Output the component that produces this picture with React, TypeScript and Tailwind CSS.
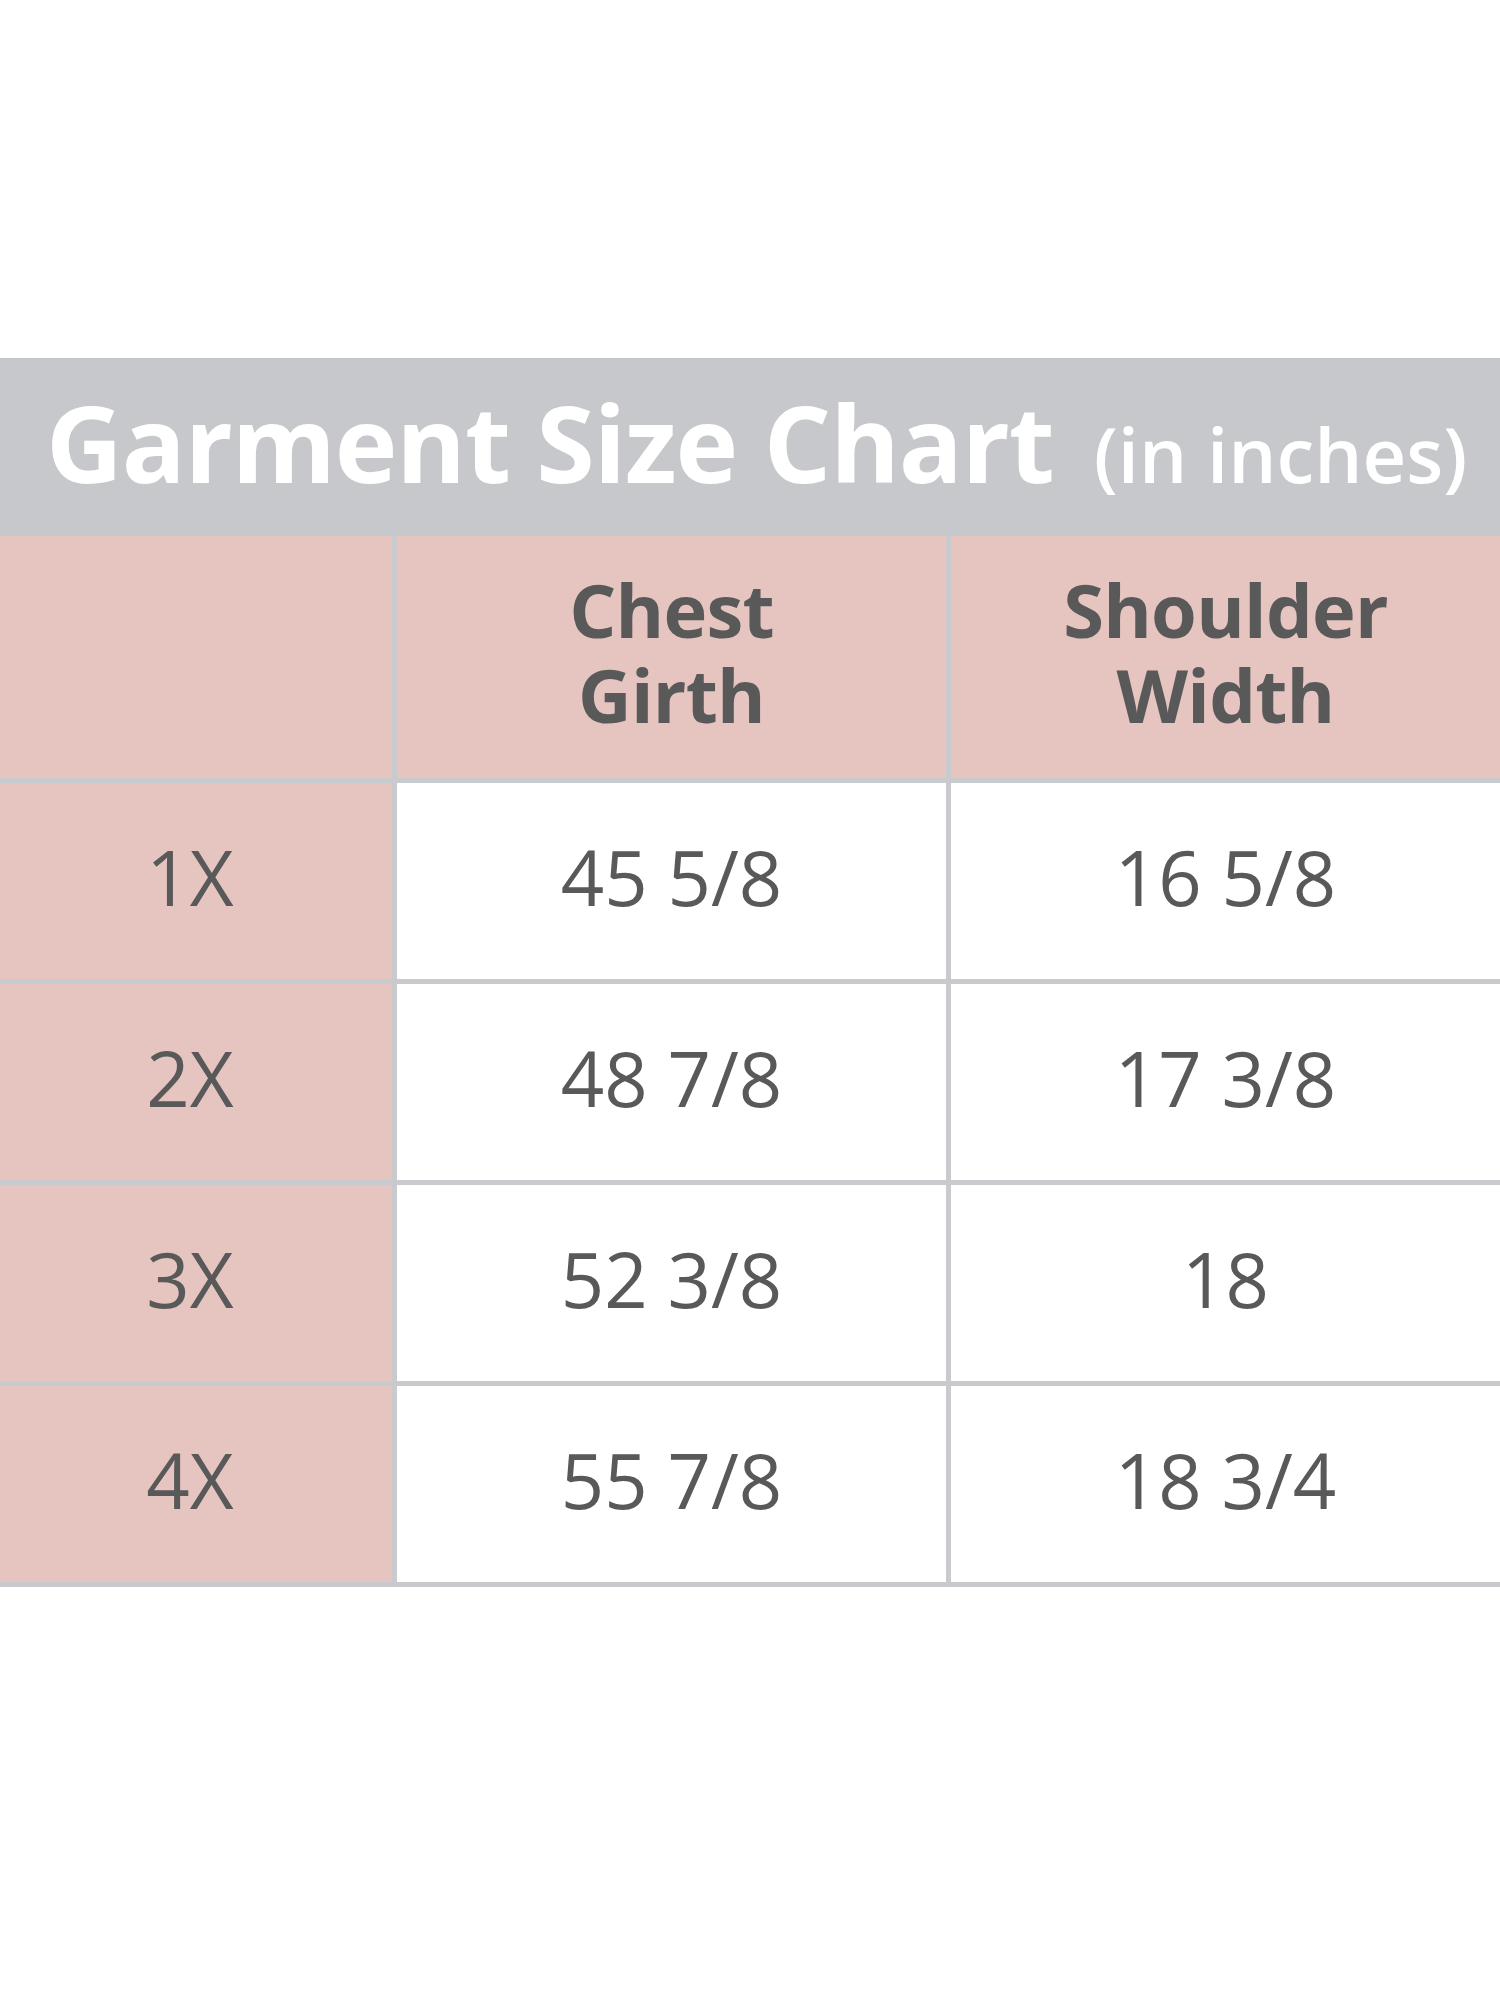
import React from "react";

interface SizeRow {
  size: string;
  chest: string;
  shoulder: string;
}

const rows: SizeRow[] = [
  { size: "1X", chest: "45 5/8", shoulder: "16 5/8" },
  { size: "2X", chest: "48 7/8", shoulder: "17 3/8" },
  { size: "3X", chest: "52 3/8", shoulder: "18" },
  { size: "4X", chest: "55 7/8", shoulder: "18 3/4" },
];

const HeadCell: React.FC<{ top: string; bottom: string }> = ({ top, bottom }) => (
  <div className="h-[242px] bg-[#e6c5c0] flex flex-col items-center justify-center pb-[10px] text-[74px] font-bold leading-[85px] tracking-[-0.01em]">
    <div className="h-[85px]">{top}</div>
    <div className="h-[85px]">{bottom}</div>
  </div>
);

const App: React.FC = () => {
  return (
    <div className="w-[1500px] min-h-[2000px] bg-white pt-[358px] font-['Open_Sans',_'Noto_Sans',_sans-serif] text-[#595959]">
      {/* title bar */}
      <div className="h-[178px] bg-[#c7c8cb] flex items-center pl-[46px] pb-[10px]">
        <div className="flex items-baseline text-white">
          <span className="text-[106px] font-bold leading-none tracking-[-0.01em]">
            Garment Size Chart
          </span>
          <span className="ml-[40px] text-[76px] font-semibold leading-none">
            (in inches)
          </span>
        </div>
      </div>

      {/* table */}
      <div className="grid grid-cols-[392px_549px_1fr] gap-[5px] bg-[#c9cacd] pb-[5px]">
        <div className="h-[242px] bg-[#e6c5c0]"></div>
        <HeadCell top="Chest" bottom="Girth" />
        <HeadCell top="Shoulder" bottom="Width" />

        {rows.map((r) => (
          <React.Fragment key={r.size}>
            <div className="h-[196px] bg-[#e6c5c0] flex items-center justify-center pb-[8px] pr-[12px] text-[76px] leading-none">
              {r.size}
            </div>
            <div className="h-[196px] bg-white flex items-center justify-center pb-[8px] text-[76px] leading-none">
              {r.chest}
            </div>
            <div className="h-[196px] bg-white flex items-center justify-center pb-[8px] text-[76px] leading-none">
              {r.shoulder}
            </div>
          </React.Fragment>
        ))}
      </div>
    </div>
  );
};

export default App;
